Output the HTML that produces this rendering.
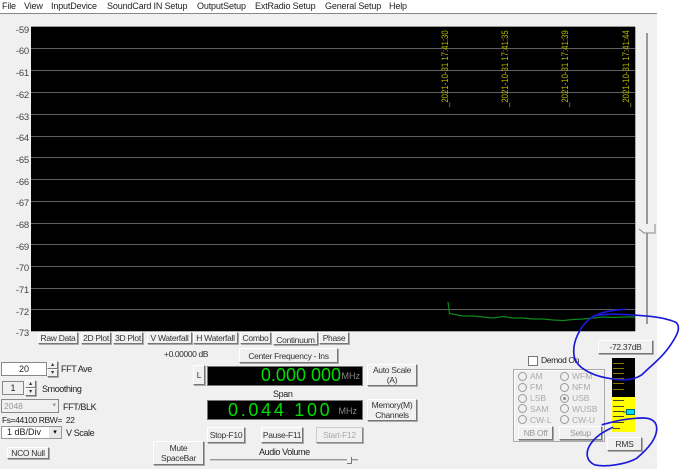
<!DOCTYPE html>
<html><head><meta charset="utf-8">
<style>
html,body{margin:0;padding:0;background:#fff}
#r{position:relative;width:680px;height:469px;overflow:hidden;background:#fff;font-family:"Liberation Sans",sans-serif;font-size:9px;color:#222;filter:blur(.3px)}
#p{position:absolute;left:0;top:14px;width:657px;height:455px;background:#f0f0f0}
.m{position:absolute;top:0;font-size:9px;color:#222;white-space:nowrap;line-height:12px;letter-spacing:-.15px}
.a{position:absolute;white-space:nowrap;letter-spacing:-.4px}
.b{position:absolute;box-sizing:border-box;background:#f0f0f0;border:1px solid;border-color:#fff #777 #777 #fff;box-shadow:1px 1px 0 #aaa;text-align:center;display:flex;align-items:center;justify-content:center;line-height:10px;font-size:8.5px;color:#333;white-space:nowrap;letter-spacing:-.3px}
.g{position:absolute;left:31px;width:604px;height:1px;background:#606060}
.y{position:absolute;left:14px;width:15px;text-align:right;font-size:9.5px;color:#444;line-height:10px;letter-spacing:-.2px}
.t{position:absolute;font-size:9.5px;color:#b8b800;white-space:nowrap;transform-origin:0 0;transform:rotate(-90deg) scale(.82,1);line-height:10px}
.d{position:absolute;background:#000;border:1px solid #777;box-sizing:border-box;color:#0d0;font-size:18px;line-height:18px;white-space:nowrap}
.r{position:absolute;width:7px;height:7px;border-radius:50%;border:1px solid #999;background:#f0f0f0}
.l{position:absolute;font-size:8.5px;color:#aaa;line-height:10px}
.s{position:absolute;box-sizing:border-box;background:#fff;border:1px solid #888;font-size:9px;text-align:center}
</style></head><body>
<div id="r">
<div style="position:absolute;left:0;top:13px;width:657px;height:1px;background:#888"></div>
<div id="p"></div>
<span class="m" style="left:2px">File</span><span class="m" style="left:24px">View</span><span class="m" style="left:51px">InputDevice</span><span class="m" style="left:107px">SoundCard IN Setup</span><span class="m" style="left:197px">OutputSetup</span><span class="m" style="left:255px">ExtRadio Setup</span><span class="m" style="left:325px">General Setup</span><span class="m" style="left:389px">Help</span>

<div style="position:absolute;left:31px;top:27px;width:604px;height:304px;background:#000;box-shadow:0 -1px 0 #999,0 1px 0 #aaa,1px 0 0 #aaa"></div>
<div class="g" style="top:48px"></div><div class="g" style="top:70px"></div><div class="g" style="top:92px"></div><div class="g" style="top:114px"></div><div class="g" style="top:136px"></div><div class="g" style="top:157px"></div><div class="g" style="top:179px"></div><div class="g" style="top:201px"></div><div class="g" style="top:223px"></div><div class="g" style="top:244px"></div><div class="g" style="top:266px"></div><div class="g" style="top:288px"></div><div class="g" style="top:309px"></div>

<div class="y" style="top:26px">-59</div><div class="y" style="top:47px">-60</div><div class="y" style="top:69px">-61</div><div class="y" style="top:91px">-62</div><div class="y" style="top:113px">-63</div><div class="y" style="top:134px">-64</div><div class="y" style="top:156px">-65</div><div class="y" style="top:178px">-66</div><div class="y" style="top:199px">-67</div><div class="y" style="top:221px">-68</div><div class="y" style="top:243px">-69</div><div class="y" style="top:264px">-70</div><div class="y" style="top:286px">-71</div><div class="y" style="top:308px">-72</div><div class="y" style="top:329px">-73</div>

<div class="t" style="left:441px;top:107px">_2021-10-31 17:41:30</div>
<div class="t" style="left:501px;top:107px">_2021-10-31 17:41:35</div>
<div class="t" style="left:561px;top:107px">_2021-10-31 17:41:39</div>
<div class="t" style="left:622px;top:107px">_2021-10-31 17:41:44</div>

<div style="position:absolute;left:646px;top:33px;width:2px;height:291px;background:#999"></div>
<svg style="position:absolute;left:638px;top:222px" width="20" height="14"><path d="M1 7 L7 2 H17 V11 H6 Z" fill="#f0f0f0"/><path d="M1 7 L6 11 H17 V2" fill="none" stroke="#888"/></svg>

<div class="b" style="left:38px;top:332px;width:40px;height:12px">Raw Data</div>
<div class="b" style="left:81px;top:332px;width:30px;height:12px">2D Plot</div>
<div class="b" style="left:113px;top:332px;width:30px;height:12px">3D Plot</div>
<div class="b" style="left:147px;top:332px;width:45px;height:12px">V Waterfall</div>
<div class="b" style="left:193px;top:332px;width:45px;height:12px">H Waterfall</div>
<div class="b" style="left:240px;top:332px;width:31px;height:12px">Combo</div>
<div class="b" style="left:273px;top:332px;width:45px;height:13px;padding-top:2px">Continuum</div>
<div class="b" style="left:319px;top:332px;width:30px;height:12px">Phase</div>

<div class="a" style="left:164px;top:349px;color:#333;font-size:8.5px">+0.00000 dB</div>

<div class="s" style="left:1px;top:362px;width:46px;height:14px;line-height:12px">20</div>
<div class="b" style="left:47px;top:361px;width:11px;height:8px;font-size:6px">▴</div><div class="b" style="left:47px;top:369px;width:11px;height:8px;font-size:6px">▾</div>
<div class="a" style="left:61px;top:364px">FFT Ave</div>
<div class="s" style="left:2px;top:381px;width:22px;height:14px;line-height:12px;background:#f0f0f0">1</div>
<div class="b" style="left:25px;top:380px;width:11px;height:8px;font-size:6px">▴</div><div class="b" style="left:25px;top:388px;width:11px;height:8px;font-size:6px">▾</div>
<div class="a" style="left:42px;top:384px">Smoothing</div>
<div class="s" style="left:1px;top:399px;width:58px;height:14px;background:#f0f0f0;color:#999;text-align:left;padding-left:2px;line-height:12px;font-size:8.5px">2048<span style="position:absolute;right:2px;top:0;font-size:7px">▾</span></div>
<div class="a" style="left:63px;top:402px">FFT/BLK</div>
<div class="a" style="left:2px;top:415px;font-size:8.5px">Fs=44100 RBW= &nbsp;22</div>
<div class="s" style="left:1px;top:426px;width:61px;height:13px;line-height:11px;text-align:left;padding-left:5px;border-color:#999">1 dB/Div<span style="position:absolute;right:0;top:0;width:12px;height:11px;background:#e8e8e8;font-size:7px;text-align:center;color:#000">▾</span></div>
<div class="a" style="left:66px;top:428px">V Scale</div>
<div class="b" style="left:7px;top:447px;width:42px;height:12px">NCO Null</div>
<div class="b" style="left:153px;top:441px;width:51px;height:24px">Mute<br>SpaceBar</div>

<div class="b" style="left:239px;top:348px;width:99px;height:15px">Center Frequency - Ins</div>
<div class="b" style="left:193px;top:365px;width:12px;height:20px">L</div>
<div class="d" style="left:207px;top:366px;width:156px;height:20px"><span style="position:absolute;right:21px;top:-1px">0.000 000</span><span style="position:absolute;right:2px;top:4px;font-size:9px;line-height:10px;color:#888">MHz</span></div>
<div class="a" style="left:273px;top:389px">Span</div>
<div class="d" style="left:207px;top:400px;width:156px;height:20px"><span style="position:absolute;left:20px;top:0;letter-spacing:2.7px">0.044 100</span><span style="position:absolute;right:5px;top:5px;font-size:9px;line-height:10px;color:#888">MHz</span></div>
<div class="b" style="left:367px;top:364px;width:50px;height:22px">Auto Scale<br>(A)</div>
<div class="b" style="left:367px;top:399px;width:50px;height:22px">Memory(M)<br>Channels</div>
<div class="b" style="left:207px;top:427px;width:38px;height:16px">Stop-F10</div>
<div class="b" style="left:261px;top:427px;width:42px;height:16px">Pause-F11</div>
<div class="b" style="left:316px;top:427px;width:47px;height:16px;color:#aaa;border-color:#ccc #888 #888 #ccc">Start-F12</div>
<div class="a" style="left:259px;top:447px">Audio Volume</div>
<div style="position:absolute;left:210px;top:459px;width:148px;height:1px;background:#999;box-shadow:0 1px 0 #ccc"></div>
<div style="position:absolute;left:347px;top:457px;width:4px;height:6px;background:#f0f0f0;border-right:1px solid #777;border-bottom:1px solid #777"></div>

<div style="position:absolute;left:528px;top:356px;width:8px;height:8px;background:#fff;border:1px solid #777"></div>
<div class="a" style="left:541px;top:355px;font-size:8.5px">Demod On</div>
<div style="position:absolute;left:513px;top:369px;width:92px;height:73px;box-sizing:border-box;border:1px solid #aaa;box-shadow:inset 1px 1px 0 #fff"></div>
<div class="r" style="left:518px;top:372px"></div><div class="l" style="left:530px;top:371px">AM</div>
<div class="r" style="left:518px;top:383px"></div><div class="l" style="left:530px;top:382px">FM</div>
<div class="r" style="left:518px;top:394px"></div><div class="l" style="left:530px;top:393px">LSB</div>
<div class="r" style="left:518px;top:404px"></div><div class="l" style="left:530px;top:404px">SAM</div>
<div class="r" style="left:518px;top:415px"></div><div class="l" style="left:530px;top:415px">CW-L</div>
<div class="r" style="left:560px;top:372px"></div><div class="l" style="left:572px;top:371px">WFM</div>
<div class="r" style="left:560px;top:383px"></div><div class="l" style="left:572px;top:382px">NFM</div>
<div class="r" style="left:560px;top:394px"></div><div style="position:absolute;left:563px;top:397px;width:3px;height:3px;background:#888;border-radius:50%"></div><div class="l" style="left:572px;top:393px">USB</div>
<div class="r" style="left:560px;top:404px"></div><div class="l" style="left:572px;top:404px">WUSB</div>
<div class="r" style="left:560px;top:415px"></div><div class="l" style="left:572px;top:415px">CW-U</div>
<div class="b" style="left:518px;top:426px;width:35px;height:14px;color:#999">NB Off</div>
<div class="b" style="left:559px;top:426px;width:43px;height:14px;color:#999">Setup</div>

<div class="b" style="left:598px;top:340px;width:55px;height:14px">-72.37dB</div>

<div style="position:absolute;left:612px;top:358px;width:23px;height:39px;background:#000"></div>
<div style="position:absolute;left:612px;top:397px;width:23px;height:35px;background:#ff0"></div>
<svg style="position:absolute;left:612px;top:358px" width="24" height="76">
<g stroke="#887700" stroke-width="1"><path d="M1 5.500H12M1 10.500H12M1 15.500H12M1 20.500H12M1 25.500H12M1 31.500H12"/></g>
<g stroke="#443"><path d="M1 42.500H12M1 48.500H12M1 53.500H12M1 58.500H12M1 64.500H12M1 70.500H8"/></g>
<rect x="14.500" y="51.500" width="8" height="5" fill="#00e0f0" stroke="#067"/><path d="M14 54H11" stroke="#067"/>
</svg>
<div class="b" style="left:607px;top:437px;width:35px;height:14px">RMS</div>

<svg style="position:absolute;left:0;top:0" width="680" height="469">
<path d="M448 302 L449.500 313.500 L455 314.500 L463 316 L473 316 L483 317 L493 318 L503 316.500 L513 318 L523 318 L533 319 L543 319 L553 320 L563 320.500 L573 319.500 L583 319 L593 318 L603 317 L613 317.500 L623 317 L635 317" fill="none" stroke="#0a8a1e" stroke-width="1.2"/>
<g transform="translate(430 290) scale(.3333)" fill="none" stroke="#1a1ad8" stroke-width="5" stroke-linecap="round" stroke-linejoin="round">
<path d="M585 58 C540 60 490 70 465 100 C440 130 428 165 432 195 C436 230 480 255 530 264 C570 272 610 272 635 255 C665 225 700 200 725 160 C745 130 752 110 738 97 C700 80 640 76 570 73 C550 72 520 72 490 78"/>
<path d="M517 404 C550 395 590 384 640 384 C665 384 682 395 680 420 C678 450 650 480 620 505 C590 522 530 532 495 525 C470 515 465 490 480 465 C495 440 520 425 548 412"/>
</g>
</svg>
</div>
</body></html>
